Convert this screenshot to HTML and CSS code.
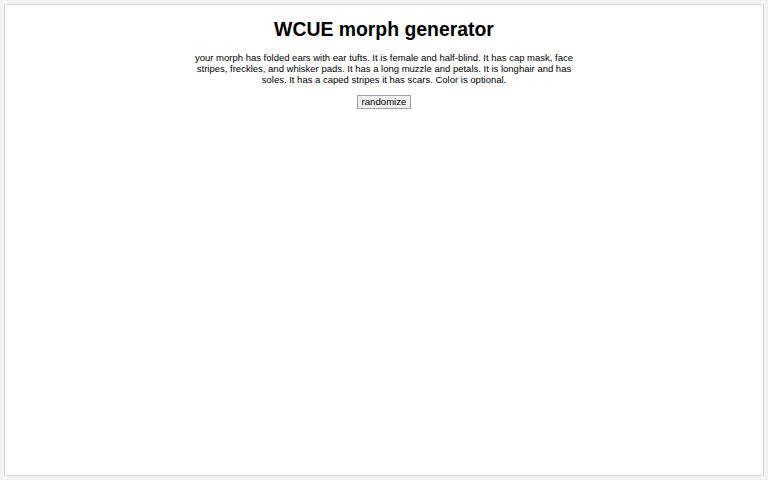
FILE: index.html
```html
<!DOCTYPE html>
<html lang="en">
<head>
<meta charset="utf-8">
<title>WCUE morph generator</title>
<link rel="stylesheet" href="styles.css">
</head>
<body>
<main class="card">
  <h1 class="title">WCUE morph generator</h1>
  <p class="result">your morph has folded ears with ear tufts. It is female and half-blind. It has cap mask, face stripes, freckles, and whisker pads. It has a long muzzle and petals. It is longhair and has soles. It has a caped stripes it has scars. Color is optional.</p>
  <button class="randomize" type="button">randomize</button>
</main>
</body>
</html>
```
FILE: styles.css
```css
html, body {
  height: 100%;
}

body {
  margin: 0;
  padding: 4px;
  box-sizing: border-box;
  background: #f1f1f1;
  font-family: "Liberation Sans", Arial, sans-serif;
  color: #000;
}

.card {
  box-sizing: border-box;
  height: 100%;
  background: #fff;
  border: 1px solid #dcdcdc;
  display: flex;
  flex-direction: column;
  align-items: center;
  padding-top: 13px;
}

.title {
  margin: 0;
  font-size: 19.4px;
  line-height: 22px;
  font-weight: bold;
}

.result {
  width: 382px;
  margin: 12px 0 0;
  font-size: 9.5px;
  line-height: 11px;
  text-align: center;
}

.randomize {
  margin-top: 10px;
  font-family: "Liberation Sans", Arial, sans-serif;
  font-size: 9.6px;
  line-height: 11px;
  padding: 0 4px 1px;
  background: #efefef;
  border: 1px solid #a0a0a0;
  border-radius: 0;
  color: #000;
}
```
